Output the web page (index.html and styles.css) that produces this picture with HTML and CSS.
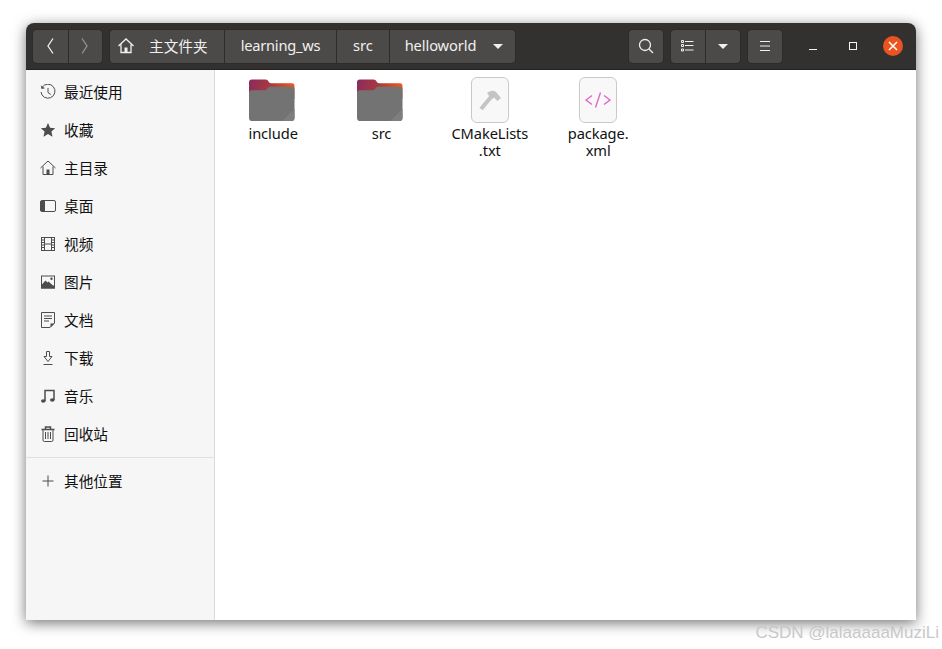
FILE: index.html
```html
<!DOCTYPE html>
<html>
<head>
    <meta charset="utf-8">
    <title>helloworld</title>
    <link rel="stylesheet" href="styles.css">
</head>
<body>
    <div class="window">
        <header class="toolbar">
            <div class="btn-group nav-group">
                <div class="tool-btn nav-btn">
                    <svg width="16" height="24" viewBox="0 0 16 24"><path d="M11 4.500 L6 12 L11 19.500" class="line"/></svg>
                </div>
                <div class="tool-btn nav-btn dim">
                    <svg width="16" height="24" viewBox="0 0 16 24"><path d="M5 4.500 L10 12 L5 19.500" class="line"/></svg>
                </div>
            </div>

            <div class="btn-group path-group">
                <div class="tool-btn crumb crumb-home">
                    <svg width="16" height="16" viewBox="0 0 16 16"><path d="M0.500 8 L8 1 L15.500 8 M3 6.500 V14.500 H13 V6.500" class="line"/><rect x="6.500" y="9.500" width="3" height="5" fill="#f0f0ee"/></svg>
                    <span>主文件夹</span>
                </div>
                <div class="tool-btn crumb crumb-ws">learning_ws</div>
                <div class="tool-btn crumb crumb-src">src</div>
                <div class="tool-btn crumb crumb-hello">
                    <span>helloworld</span>
                    <i class="caret"></i>
                </div>
            </div>

            <div class="btn-group search-group">
                <div class="tool-btn square-btn">
                    <svg width="16" height="16" viewBox="0 0 16 16"><circle cx="7" cy="7" r="5.500" class="line"/><path d="M11 11 L15 15" class="line"/></svg>
                </div>
            </div>

            <div class="btn-group view-group">
                <div class="tool-btn square-btn">
                    <svg width="14" height="12" viewBox="0 0 14 12"><path d="M0.500 0.500 H2.500 V2.500 H0.500 Z M0.500 4.500 H2.500 V6.500 H0.500 Z M0.500 9 H2.500 V11 H0.500 Z" class="line thin"/><path d="M4 1.500 H12.500 M4 5.500 H12.500 M4 10 H12.500" class="line thin"/></svg>
                </div>
                <div class="tool-btn square-btn"><i class="caret"></i></div>
            </div>

            <div class="btn-group menu-group">
                <div class="tool-btn square-btn">
                    <svg width="12" height="10" viewBox="0 0 12 10"><path d="M1 0.500 H11 M1 5 H11 M1 9.500 H11" class="line thin"/></svg>
                </div>
            </div>

            <div class="win-controls">
                <div class="win-btn"><i class="win-min"></i></div>
                <div class="win-btn"><i class="win-max"></i></div>
                <div class="win-btn">
                    <div class="win-close">
                        <svg width="10" height="10" viewBox="0 0 10 10"><path d="M1 1 L9 9 M9 1 L1 9" stroke="#fff" stroke-width="1.500" fill="none"/></svg>
                    </div>
                </div>
            </div>
        </header>

        <div class="content">
            <aside class="sidebar">
                <ul class="places">
                    <li class="place">
                        <svg width="16" height="16" viewBox="0 0 16 16"><path d="M2.200 3.200 A7 7 0 1 1 1 8" class="icon-line"/><path d="M0.800 1.500 L1.500 5 L5 4.300 Z" fill="#4d4d4d"/><path d="M8 4 V8.500 L10.800 10.500" class="icon-line"/></svg>
                        <span>最近使用</span>
                    </li>
                    <li class="place">
                        <svg width="16" height="16" viewBox="0 0 16 16"><path d="M8 1 L10.100 5.700 L15.200 6.200 L11.400 9.600 L12.500 14.700 L8 12.100 L3.500 14.700 L4.600 9.600 L0.800 6.200 L5.900 5.700 Z" fill="#4d4d4d"/></svg>
                        <span>收藏</span>
                    </li>
                    <li class="place">
                        <svg width="16" height="16" viewBox="0 0 16 16"><path d="M0.500 8 L8 1 L15.500 8 M3 6.500 V14.500 H13 V6.500" class="icon-line"/><rect x="6.500" y="9.500" width="3" height="5" fill="#4d4d4d"/></svg>
                        <span>主目录</span>
                    </li>
                    <li class="place">
                        <svg width="16" height="16" viewBox="0 0 16 16"><rect x="0.500" y="2.500" width="15" height="11" rx="1.500" class="icon-line"/><path d="M2 2.500 H5 V13.500 H2 A1.500 1.500 0 0 1 0.500 12 V4 A1.500 1.500 0 0 1 2 2.500 Z" fill="#4d4d4d"/></svg>
                        <span>桌面</span>
                    </li>
                    <li class="place">
                        <svg width="16" height="16" viewBox="0 0 16 16"><rect x="1.500" y="1.500" width="13" height="13" class="icon-line"/><path d="M4.500 1.500 V14.500 M11.500 1.500 V14.500 M4.500 8 H11.500" class="icon-line"/><path d="M1 4 H4 M1 6.500 H4 M1 9 H4 M1 11.500 H4 M12 4 H15 M12 6.500 H15 M12 9 H15 M12 11.500 H15" stroke="#4d4d4d" fill="none"/></svg>
                        <span>视频</span>
                    </li>
                    <li class="place">
                        <svg width="16" height="16" viewBox="0 0 16 16"><rect x="1.500" y="2" width="13" height="12" class="icon-line"/><path d="M1 14.500 V11.500 L5.500 6.500 L7.500 8.500 L8.500 7.500 L13 11.500 H15 V14.500 Z" fill="#4d4d4d"/><circle cx="11.500" cy="4.800" r="1.200" fill="#4d4d4d"/></svg>
                        <span>图片</span>
                    </li>
                    <li class="place">
                        <svg width="16" height="16" viewBox="0 0 16 16"><path d="M10 15.500 H1.500 V0.500 H14.500 V11 Z" class="icon-line"/><path d="M4 4 H12 M4 6.500 H12 M4 9 H9" class="icon-line"/><path d="M10.500 15.500 V11.500 H14.500 Z" fill="#4d4d4d"/></svg>
                        <span>文档</span>
                    </li>
                    <li class="place">
                        <svg width="16" height="16" viewBox="0 0 16 16"><path d="M6.500 1.500 H9.500 V6.500 H12 L8 11.500 L4 6.500 H6.500 Z M3.500 14.500 H12.500" class="icon-line"/></svg>
                        <span>下载</span>
                    </li>
                    <li class="place">
                        <svg width="16" height="16" viewBox="0 0 16 16"><path d="M5 13 V2.500 H14 V12" class="icon-line bold"/><ellipse cx="3.300" cy="13" rx="2.300" ry="1.800" fill="#4d4d4d"/><ellipse cx="12.300" cy="12" rx="2.300" ry="1.800" fill="#4d4d4d"/></svg>
                        <span>音乐</span>
                    </li>
                    <li class="place">
                        <svg width="16" height="16" viewBox="0 0 16 16"><path d="M1.500 3.500 H14.500 M5.500 3 V1 H10.500 V3" class="icon-line bold"/><path d="M3 4 V14 A1.500 1.500 0 0 0 4.500 15.500 H11.500 A1.500 1.500 0 0 0 13 14 V4" class="icon-line"/><path d="M5.500 6 V13 M8 6 V13 M10.500 6 V13" class="icon-line"/></svg>
                        <span>回收站</span>
                    </li>
                </ul>
                <div class="places-sep"></div>
                <div class="place">
                    <svg width="16" height="16" viewBox="0 0 16 16"><path d="M8 2.500 V13.500 M2.500 8 H13.500" class="icon-line"/></svg>
                    <span>其他位置</span>
                </div>
            </aside>

            <main class="files">
                <div class="file">
                    <svg class="folder" width="46" height="43" viewBox="0 0 47 43">
                        <defs>
                            <linearGradient id="folderBack" x1="0" y1="0" x2="1" y2="0.150">
                                <stop offset="0" stop-color="#8a2a5e"/>
                                <stop offset="0.500" stop-color="#a83a3e"/>
                                <stop offset="1" stop-color="#e9591f"/>
                            </linearGradient>
                        </defs>
                        <path d="M3 0 H17 Q19 0 20 2 Q21 4 23 4 H44 Q46.500 4 46.500 7 V20 H0 V3 Q0 0 3 0 Z" fill="url(#folderBack)"/>
                        <path d="M3 11 H16 Q18 11 19 9 Q20 7.500 22 7.500 H44 Q46.500 7.500 46.500 10.500 V39 Q46.500 42.500 43 42.500 H3.500 Q0 42.500 0 39 V14 Q0 11 3 11 Z" fill="#737373"/>
                        <path d="M46.500 30 V39 Q46.500 42.500 43 42.500 H34 Z" fill="#7e7e7e"/>
                    </svg>
                    <span class="file-name">include</span>
                </div>
                <div class="file">
                    <svg class="folder" width="46" height="43" viewBox="0 0 47 43">
                        <path d="M3 0 H17 Q19 0 20 2 Q21 4 23 4 H44 Q46.500 4 46.500 7 V20 H0 V3 Q0 0 3 0 Z" fill="url(#folderBack)"/>
                        <path d="M3 11 H16 Q18 11 19 9 Q20 7.500 22 7.500 H44 Q46.500 7.500 46.500 10.500 V39 Q46.500 42.500 43 42.500 H3.500 Q0 42.500 0 39 V14 Q0 11 3 11 Z" fill="#737373"/>
                        <path d="M46.500 30 V39 Q46.500 42.500 43 42.500 H34 Z" fill="#7e7e7e"/>
                    </svg>
                    <span class="file-name">src</span>
                </div>
                <div class="file">
                    <div class="doc">
                        <svg width="24" height="24" viewBox="0 0 24 24"><path d="M3 21 L13 9" stroke="#c4c4c4" stroke-width="4" fill="none"/><path d="M9 5 Q14 1 18 4 L23 10 L19.500 13 L16 9.500 L13.500 11.500 Z" fill="#c4c4c4"/></svg>
                    </div>
                    <span class="file-name">CMakeLists<br>.txt</span>
                </div>
                <div class="file">
                    <div class="doc">
                        <svg width="26" height="18" viewBox="0 0 26 18"><path d="M7 4.500 L1 9 L7 13.500 M19 4.500 L25 9 L19 13.500 M15.500 1.500 L10.500 16.500" stroke="#e267c8" stroke-width="1.400" fill="none"/></svg>
                    </div>
                    <span class="file-name">package.<br>xml</span>
                </div>
            </main>
        </div>
    </div>
    <div class="watermark">CSDN @lalaaaaaMuziLi</div>
</body>
</html>
```

FILE: styles.css
```css
* {
    box-sizing: border-box;
}
html, body {
    height: 100%;
}
body {
    margin: 0;
    padding: 23px 0 0 26px;
    background: #fff;
    font-family: "Noto Sans", "Noto Sans CJK SC", sans-serif;
    font-size: 14.67px;
    overflow: hidden;
}
.window {
    width: 890px;
    height: 597px;
    border-radius: 8px 8px 0 0;
    overflow: hidden;
    display: flex;
    flex-direction: column;
    box-shadow: 0 3px 14px rgba(0, 0, 0, 0.55);
}

/* toolbar */
.toolbar {
    height: 47px;
    flex: none;
    display: flex;
    align-items: center;
    padding-left: 7px;
    background: #333130;
    border-bottom: 1px solid #242322;
    color: #f0f0ee;
}
.btn-group {
    display: flex;
    height: 33px;
    border-radius: 4px;
    overflow: hidden;
    background: #4c4a48;
    box-shadow: 0 0 0 1px #2d2c2b;
}
.tool-btn {
    height: 100%;
    display: flex;
    align-items: center;
    justify-content: center;
    border-left: 1px solid #2d2c2b;
    white-space: nowrap;
}
.tool-btn:first-child {
    border-left: 0;
}
.line {
    fill: none;
    stroke: #f0f0ee;
    stroke-width: 1.300;
}
.line.thin {
    stroke-width: 1;
}
.caret {
    display: block;
    width: 0;
    height: 0;
    border-left: 5px solid transparent;
    border-right: 5px solid transparent;
    border-top: 5px solid #f0f0ee;
}
.nav-group {
    width: 69px;
}
.nav-btn {
    width: 35px;
}
.nav-btn.dim svg {
    opacity: 0.45;
}
.path-group {
    width: 405px;
    margin-left: 8px;
}
.crumb {
    padding-bottom: 2px;
}
.crumb-home {
    width: 114px;
    gap: 15px;
    justify-content: flex-start;
    padding-left: 8px;
}
.crumb-home svg {
    margin-top: 2px;
}
.crumb-ws {
    width: 112px;
    letter-spacing: -0.25px;
}
.crumb-src {
    width: 53px;
}
.crumb-hello {
    width: 126px;
    gap: 17px;
    padding-left: 3px;
    letter-spacing: -0.1px;
}
.crumb-hello .caret {
    margin-top: 2px;
}
.search-group {
    margin-left: 114px;
}
.square-btn {
    width: 34px;
}
.view-group {
    margin-left: 8px;
}
.view-group .square-btn:last-child {
    width: 35px;
}
.menu-group {
    margin-left: 8px;
}
.win-controls {
    display: flex;
    margin-left: 11px;
}
.win-btn {
    width: 40px;
    display: flex;
    align-items: center;
    justify-content: center;
}
.win-min {
    display: block;
    width: 8px;
    height: 1px;
    margin-top: 7px;
    background: #f5f5f5;
}
.win-max {
    display: block;
    width: 8px;
    height: 8px;
    border: 1px solid #f5f5f5;
}
.win-close {
    width: 20px;
    height: 20px;
    border-radius: 50%;
    background: #e95420;
    display: flex;
    align-items: center;
    justify-content: center;
}

/* sidebar + files */
.content {
    flex: 1;
    display: flex;
    min-height: 0;
}
.sidebar {
    width: 189px;
    flex: none;
    padding-top: 3px;
    background: #f6f6f6;
    border-right: 1px solid #dbdbdb;
    color: #111;
}
.places {
    list-style: none;
    margin: 0;
    padding: 0;
}
.place {
    height: 38px;
    display: flex;
    align-items: center;
    gap: 8px;
    padding: 0 0 2px 14px;
}
.place svg {
    margin-top: 2px;
}
.places-sep {
    height: 1px;
    margin-top: 4px;
    margin-bottom: 4px;
    background: #dfdfdf;
}
.icon-line {
    fill: none;
    stroke: #4d4d4d;
    stroke-width: 1;
}
.icon-line.bold {
    stroke-width: 1.500;
}
.files {
    flex: 1;
    background: #fff;
    padding: 7px 0 0 4px;
    display: grid;
    grid-template-columns: repeat(4, 108.33px);
    align-content: start;
    color: #111;
}
.file {
    display: flex;
    flex-direction: column;
    align-items: center;
}
.folder {
    margin: 2px 2px 3px 0;
}
.doc {
    width: 38px;
    height: 46px;
    margin-bottom: 2px;
    border: 1px solid #c9c9c9;
    border-radius: 6px;
    background: #f8f8f8;
    display: flex;
    align-items: center;
    justify-content: center;
}
.file-name {
    text-align: center;
    line-height: 17px;
    letter-spacing: -0.08px;
}
.watermark {
    position: absolute;
    right: 3px;
    bottom: 6px;
    font-family: "Liberation Sans", sans-serif;
    font-size: 17px;
    color: #c8c8c8;
}
```
